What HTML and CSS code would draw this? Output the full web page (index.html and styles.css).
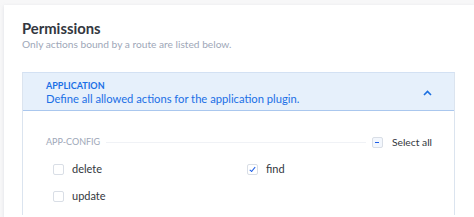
FILE: index.html
```html
<!DOCTYPE html>
<html lang="en">
<head>
    <meta charset="UTF-8">
    <meta name="viewport" content="width=device-width, initial-scale=1.0">
    <title>Permissions</title>
    <link rel="stylesheet" href="styles.css">
</head>
<body>
    <div class="page">
        <div class="card">
            <h2>Permissions</h2>
            <p class="subtitle">Only actions bound by a route are listed below.</p>

            <div class="plugin">
                <div class="plugin-header">
                    <div>
                        <div class="plugin-name">Application</div>
                        <div class="plugin-desc">Define all allowed actions for the application plugin.</div>
                    </div>
                    <svg class="chevron" width="9" height="6" viewBox="0 0 9 6">
                        <path d="M1 5 L4.5 1.5 L8 5" fill="none" stroke="#1c6fe0" stroke-width="1.6"/>
                    </svg>
                </div>

                <div class="plugin-body">
                    <div class="controller-head">
                        <span class="controller-name">app-config</span>
                        <span class="line"></span>
                        <label class="check select-all">
                            <span class="box box-minus"></span>
                            Select all
                        </label>
                    </div>
                    <div class="actions">
                        <label class="check"><span class="box"></span>delete</label>
                        <label class="check"><span class="box box-checked"></span>find</label>
                        <label class="check"><span class="box"></span>update</label>
                    </div>
                </div>
            </div>
        </div>
    </div>
</body>
</html>
```

FILE: styles.css
```css
* {
    margin: 0;
    padding: 0;
    box-sizing: border-box;
}

html, body {
    height: 100%;
    overflow: hidden;
}

body {
    font-family: Lato, "Open Sans", sans-serif;
    background: #f7f7f8;
    color: #333740;
}

.page {
    padding: 5px 0 0 4px;
    height: 100%;
}

.card {
    background: white;
    height: 100%;
    padding: 14px 18px 0 18px;
    box-shadow: 0 1px 3px rgba(200, 206, 216, 0.5);
}

h2 {
    font-size: 14.8px;
    line-height: 18px;
    font-weight: 700;
    color: #333740;
}

.subtitle {
    font-size: 10.2px;
    line-height: 14px;
    color: #9ea7b8;
}

.plugin {
    margin-top: 21px;
    width: 433px;
    border: 1px solid #dbe4ef;
    border-top-color: #d3e1f3;
    border-bottom: none;
}

.plugin-header {
    background: #e6f0fb;
    display: flex;
    align-items: center;
    justify-content: space-between;
    padding: 7px 23px 4px 23px;
    border-bottom: 1px solid #aac7ee;
}

.plugin-name {
    font-size: 9px;
    line-height: 12px;
    font-weight: 700;
    text-transform: uppercase;
    color: #1a6fe6;
}

.plugin-desc {
    font-size: 11.2px;
    line-height: 14px;
    color: #1a6fe6;
}

.chevron {
    margin-top: -1px;
    margin-right: -1px;
}

.plugin-body {
    background: white;
    padding: 23px 22px 0 23px;
    height: 104px;
}

.controller-head {
    display: flex;
    align-items: center;
    gap: 6px;
}

.controller-name {
    font-size: 9px;
    line-height: 14px;
    text-transform: uppercase;
    color: #9ea7b8;
}

.line {
    flex: 1;
    height: 1px;
    background: #f0f2f6;
}

.check {
    display: flex;
    align-items: center;
    gap: 8px;
    font-size: 11px;
    line-height: 16px;
    color: #333740;
}

.select-all {
    gap: 9px;
    font-size: 10.3px;
}

.box {
    width: 11px;
    height: 11px;
    border: 1px solid #d9dee6;
    border-radius: 2px;
    background: white;
    position: relative;
    flex: none;
}

.box-minus {
    background: #f3f7fd;
}

.box-minus::after {
    content: "";
    position: absolute;
    left: 2.5px;
    top: 4px;
    width: 4px;
    height: 1.5px;
    background: #1c5de7;
}

.box-checked::after {
    content: "";
    position: absolute;
    left: 3px;
    top: 1px;
    width: 2.4px;
    height: 4.8px;
    border: solid #1c5de7;
    border-width: 0 1.4px 1.4px 0;
    transform: rotate(40deg);
}

.actions {
    display: grid;
    grid-template-columns: 194px 1fr;
    row-gap: 11px;
    padding-left: 7px;
    margin-top: 11px;
}
```
